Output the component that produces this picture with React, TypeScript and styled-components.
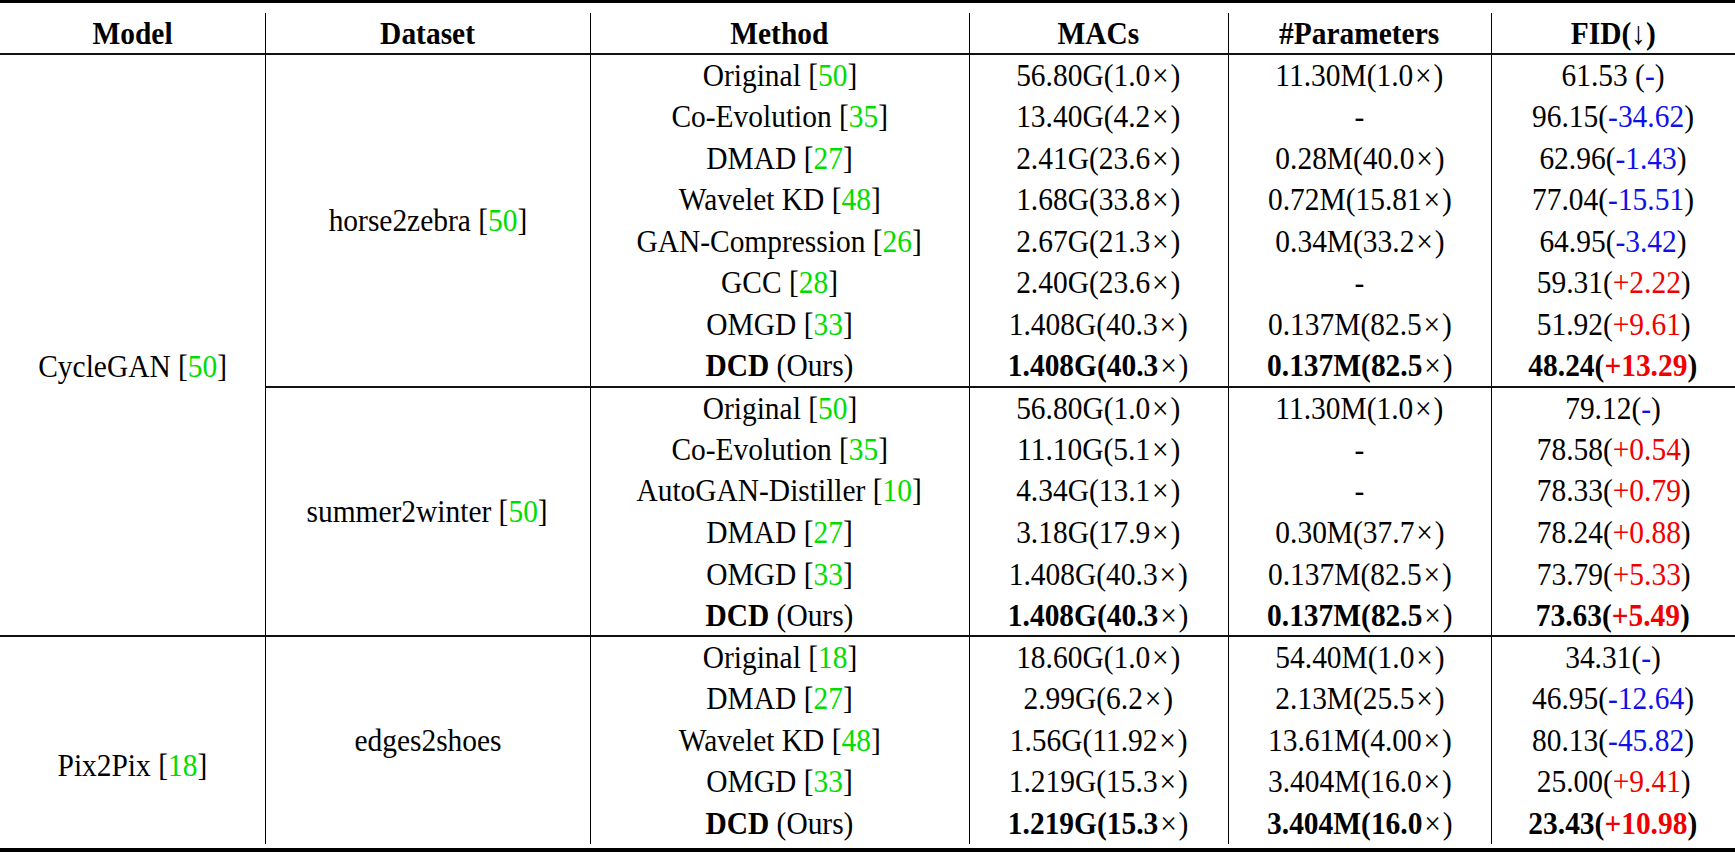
import React from "react";
import styled, { createGlobalStyle } from "styled-components";

const ROW = 41.6;

const GlobalStyle = createGlobalStyle`
  html, body {
    margin: 0;
    padding: 0;
    background: #fff;
  }
  body {
    font-family: "Liberation Serif", "Times New Roman", serif;
    color: #000;
  }
`;

const Page = styled.div`
  width: 1735px;
  height: 856px;
  overflow: hidden;
`;

const Rule = styled.div<{ $thick: number; $gap: number }>`
  height: ${({ $thick }) => `${$thick}px`};
  margin-top: ${({ $gap }) => `${$gap}px`};
  background: #000;
`;

const Table = styled.table`
  width: 100%;
  table-layout: fixed;
  border-collapse: collapse;
  margin-top: 10px;
  font-size: 32px;
  line-height: 1.15;
`;

const HeadRow = styled.tr`
  height: 41px;
`;

const Row = styled.tr`
  height: ${ROW}px;
`;

const Head = styled.th<{ $edge?: boolean }>`
  padding: 0;
  font-weight: 700;
  text-align: center;
  vertical-align: middle;
  border-bottom: 2px solid #111;
  border-left: ${({ $edge }) => ($edge ? "none" : "1px solid #000")};
`;

const Cell = styled.td<{ $edge?: boolean; $rule?: boolean; $drop?: number }>`
  padding: ${({ $drop }) => `${$drop || 0}px 0 0 0`};
  text-align: center;
  vertical-align: middle;
  white-space: nowrap;
  border-left: ${({ $edge }) => ($edge ? "none" : "1px solid #000")};
  border-bottom: ${({ $rule }) => ($rule ? "2px solid #111" : "none")};
`;

const Squeeze = styled.span`
  display: inline-block;
  white-space: nowrap;
  transform: scaleX(0.92);
`;

const Cite = styled.span`
  color: #00dd00;
`;

const Delta = styled.span<{ $tone: "up" | "down" }>`
  color: ${({ $tone }) => ($tone === "up" ? "#f00000" : "#1010e8")};
`;

const Strong = styled.b`
  font-weight: 700;
`;

const Times = styled.span`
  font-weight: 400;
  margin: 0 2px;
`;

const Arrow = styled.span`
  font-weight: 400;
`;

type Fid = { value: string; delta: string; tone: "up" | "down"; gap?: boolean };

type Line = {
  method: string;
  cite?: string;
  macs: string;
  params: string;
  fid: Fid;
  ours?: boolean;
};

type Group = {
  dataset: string;
  cite?: string;
  lines: Line[];
};

type Block = {
  model: string;
  cite: string;
  drop: number;
  groups: Group[];
};

const blocks: Block[] = [
  {
    model: "CycleGAN",
    cite: "50",
    drop: 42,
    groups: [
      {
        dataset: "horse2zebra",
        cite: "50",
        lines: [
          { method: "Original", cite: "50", macs: "56.80G(1.0", params: "11.30M(1.0", fid: { value: "61.53", delta: "-", tone: "down", gap: true } },
          { method: "Co-Evolution", cite: "35", macs: "13.40G(4.2", params: "-", fid: { value: "96.15", delta: "-34.62", tone: "down" } },
          { method: "DMAD", cite: "27", macs: "2.41G(23.6", params: "0.28M(40.0", fid: { value: "62.96", delta: "-1.43", tone: "down" } },
          { method: "Wavelet KD", cite: "48", macs: "1.68G(33.8", params: "0.72M(15.81", fid: { value: "77.04", delta: "-15.51", tone: "down" } },
          { method: "GAN-Compression", cite: "26", macs: "2.67G(21.3", params: "0.34M(33.2", fid: { value: "64.95", delta: "-3.42", tone: "down" } },
          { method: "GCC", cite: "28", macs: "2.40G(23.6", params: "-", fid: { value: "59.31", delta: "+2.22", tone: "up" } },
          { method: "OMGD", cite: "33", macs: "1.408G(40.3", params: "0.137M(82.5", fid: { value: "51.92", delta: "+9.61", tone: "up" } },
          { method: "DCD", ours: true, macs: "1.408G(40.3", params: "0.137M(82.5", fid: { value: "48.24", delta: "+13.29", tone: "up" } },
        ],
      },
      {
        dataset: "summer2winter",
        cite: "50",
        lines: [
          { method: "Original", cite: "50", macs: "56.80G(1.0", params: "11.30M(1.0", fid: { value: "79.12", delta: "-", tone: "down" } },
          { method: "Co-Evolution", cite: "35", macs: "11.10G(5.1", params: "-", fid: { value: "78.58", delta: "+0.54", tone: "up" } },
          { method: "AutoGAN-Distiller", cite: "10", macs: "4.34G(13.1", params: "-", fid: { value: "78.33", delta: "+0.79", tone: "up" } },
          { method: "DMAD", cite: "27", macs: "3.18G(17.9", params: "0.30M(37.7", fid: { value: "78.24", delta: "+0.88", tone: "up" } },
          { method: "OMGD", cite: "33", macs: "1.408G(40.3", params: "0.137M(82.5", fid: { value: "73.79", delta: "+5.33", tone: "up" } },
          { method: "DCD", ours: true, macs: "1.408G(40.3", params: "0.137M(82.5", fid: { value: "73.63", delta: "+5.49", tone: "up" } },
        ],
      },
    ],
  },
  {
    model: "Pix2Pix",
    cite: "18",
    drop: 50,
    groups: [
      {
        dataset: "edges2shoes",
        lines: [
          { method: "Original", cite: "18", macs: "18.60G(1.0", params: "54.40M(1.0", fid: { value: "34.31", delta: "-", tone: "down" } },
          { method: "DMAD", cite: "27", macs: "2.99G(6.2", params: "2.13M(25.5", fid: { value: "46.95", delta: "-12.64", tone: "down" } },
          { method: "Wavelet KD", cite: "48", macs: "1.56G(11.92", params: "13.61M(4.00", fid: { value: "80.13", delta: "-45.82", tone: "down" } },
          { method: "OMGD", cite: "33", macs: "1.219G(15.3", params: "3.404M(16.0", fid: { value: "25.00", delta: "+9.41", tone: "up" } },
          { method: "DCD", ours: true, macs: "1.219G(15.3", params: "3.404M(16.0", fid: { value: "23.43", delta: "+10.98", tone: "up" } },
        ],
      },
    ],
  },
];

const Ref: React.FC<{ n?: string }> = ({ n }) =>
  n ? (
    <>
      {" "}[<Cite>{n}</Cite>]
    </>
  ) : null;

const Amount: React.FC<{ text: string; ours?: boolean }> = ({ text, ours }) => {
  if (text === "-") return <>-</>;
  return (
    <>
      {ours ? <Strong>{text}</Strong> : text}
      <Times>×</Times>)
    </>
  );
};

const Score: React.FC<{ fid: Fid; ours?: boolean }> = ({ fid, ours }) => {
  const body = (
    <>
      {fid.value}
      {fid.gap ? " " : ""}(<Delta $tone={fid.tone}>{fid.delta}</Delta>)
    </>
  );
  return ours ? <Strong>{body}</Strong> : body;
};

const App: React.FC = () => {
  const rows: React.ReactNode[] = [];

  blocks.forEach((block, bi) => {
    const blockSize = block.groups.reduce((n, g) => n + g.lines.length, 0);
    const lastBlock = bi === blocks.length - 1;

    block.groups.forEach((group, gi) => {
      const lastGroup = gi === block.groups.length - 1;
      const ruleUnder = !(lastBlock && lastGroup);

      group.lines.forEach((line, li) => {
        const lastLine = li === group.lines.length - 1;
        const rule = lastLine && ruleUnder;

        rows.push(
          <Row key={`${bi}-${gi}-${li}`}>
            {gi === 0 && li === 0 && (
              <Cell $edge rowSpan={blockSize} $drop={block.drop} $rule={!lastBlock}>
                <Squeeze>
                  {block.model}
                  <Ref n={block.cite} />
                </Squeeze>
              </Cell>
            )}
            {li === 0 && (
              <Cell rowSpan={group.lines.length} $rule={ruleUnder}>
                <Squeeze>
                  {group.dataset}
                  <Ref n={group.cite} />
                </Squeeze>
              </Cell>
            )}
            <Cell $rule={rule}>
              <Squeeze>
                {line.ours ? (
                  <>
                    <Strong>{line.method}</Strong> (Ours)
                  </>
                ) : (
                  <>
                    {line.method}
                    <Ref n={line.cite} />
                  </>
                )}
              </Squeeze>
            </Cell>
            <Cell $rule={rule}>
              <Squeeze>
                <Amount text={line.macs} ours={line.ours} />
              </Squeeze>
            </Cell>
            <Cell $rule={rule}>
              <Squeeze>
                <Amount text={line.params} ours={line.ours} />
              </Squeeze>
            </Cell>
            <Cell $rule={rule}>
              <Squeeze>
                <Score fid={line.fid} ours={line.ours} />
              </Squeeze>
            </Cell>
          </Row>
        );
      });
    });
  });

  return (
    <Page>
      <GlobalStyle />
      <Rule $thick={3} $gap={0} />
      <Table>
        <colgroup>
          <col style={{ width: 265 }} />
          <col style={{ width: 325 }} />
          <col style={{ width: 379 }} />
          <col style={{ width: 259 }} />
          <col style={{ width: 263 }} />
          <col style={{ width: 244 }} />
        </colgroup>
        <thead>
          <HeadRow>
            <Head $edge>
              <Squeeze>Model</Squeeze>
            </Head>
            <Head>
              <Squeeze>Dataset</Squeeze>
            </Head>
            <Head>
              <Squeeze>Method</Squeeze>
            </Head>
            <Head>
              <Squeeze>MACs</Squeeze>
            </Head>
            <Head>
              <Squeeze>#Parameters</Squeeze>
            </Head>
            <Head>
              <Squeeze>
                FID(<Arrow>↓</Arrow>)
              </Squeeze>
            </Head>
          </HeadRow>
        </thead>
        <tbody>{rows}</tbody>
      </Table>
      <Rule $thick={4} $gap={4} />
    </Page>
  );
};

export default App;
